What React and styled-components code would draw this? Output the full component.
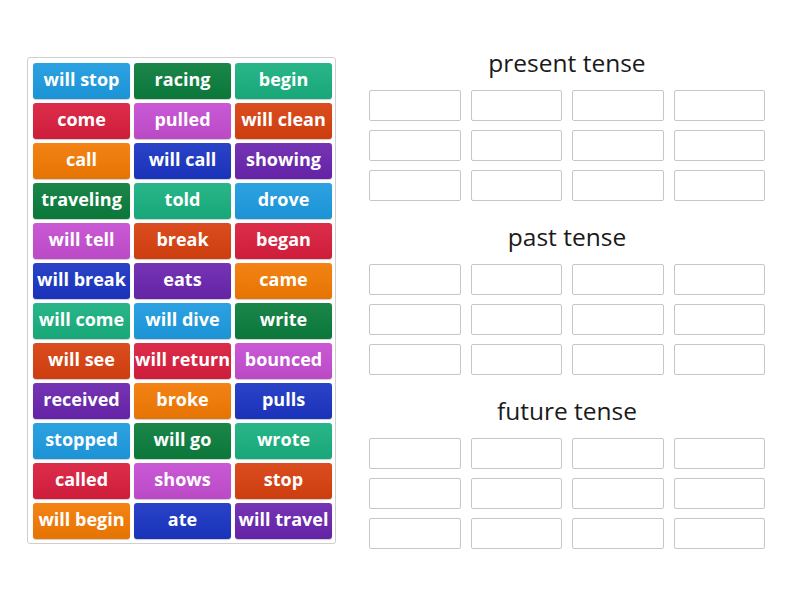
import React from 'react';
import styled, { createGlobalStyle } from 'styled-components';

const GlobalStyle = createGlobalStyle`
  html, body {
    margin: 0;
    padding: 0;
    background: #ffffff;
  }
  body {
    font-family: "Open Sans", "Liberation Sans", sans-serif;
  }
`;

// wordwall style tile colours
const colors = {
  sky: '#1d9be0',
  green: '#0b7d3c',
  teal: '#19b07f',
  red: '#d91e3e',
  magenta: '#c54dd1',
  rust: '#d8400f',
  orange: '#f27a03',
  blue: '#1a35c3',
  purple: '#6a25ae',
};

const tiles = [
  ['will stop', 'sky'], ['racing', 'green'], ['begin', 'teal'],
  ['come', 'red'], ['pulled', 'magenta'], ['will clean', 'rust'],
  ['call', 'orange'], ['will call', 'blue'], ['showing', 'purple'],
  ['traveling', 'green'], ['told', 'teal'], ['drove', 'sky'],
  ['will tell', 'magenta'], ['break', 'rust'], ['began', 'red'],
  ['will break', 'blue'], ['eats', 'purple'], ['came', 'orange'],
  ['will come', 'teal'], ['will dive', 'sky'], ['write', 'green'],
  ['will see', 'rust'], ['will return', 'red'], ['bounced', 'magenta'],
  ['received', 'purple'], ['broke', 'orange'], ['pulls', 'blue'],
  ['stopped', 'sky'], ['will go', 'green'], ['wrote', 'teal'],
  ['called', 'red'], ['shows', 'magenta'], ['stop', 'rust'],
  ['will begin', 'orange'], ['ate', 'blue'], ['will travel', 'purple'],
];

const groups = ['present tense', 'past tense', 'future tense'];

const Page = styled.div`
  display: flex;
  align-items: flex-start;
  gap: 33px;
  padding: 48px 0 0 27px;
`;

const Bank = styled.div`
  margin-top: 9px;
  box-sizing: border-box;
  width: 309px;
  padding: 5px 4px 4px 5px;
  border: 1px solid #cfcfcf;
  border-radius: 3px;
  background: #fff;
  display: grid;
  grid-template-columns: repeat(3, 97px);
  grid-auto-rows: 36px;
  column-gap: 4px;
  row-gap: 4px;
`;

const Tile = styled.div`
  display: flex;
  align-items: center;
  justify-content: center;
  padding-bottom: 4px;
  box-sizing: border-box;
  border-radius: 3px;
  background-color: ${p => colors[p.$tone]};
  background-image: linear-gradient(to bottom, rgba(255, 255, 255, 0.07), rgba(0, 0, 0, 0.05));
  box-shadow: 0 1px 1px rgba(0, 0, 0, 0.2);
  color: #fff;
  font-size: 18px;
  font-weight: 700;
  white-space: nowrap;
`;

const Groups = styled.div`
  width: 396px;
  display: flex;
  flex-direction: column;
  gap: 21px;
`;

const Group = styled.div`
  display: flex;
  flex-direction: column;
  gap: 10px;
`;

const Title = styled.div`
  text-align: center;
  font-size: 24.5px;
  line-height: 32px;
  margin-top: -1px;
  margin-bottom: 1px;
  color: #1a1a1a;
`;

const Slots = styled.div`
  display: grid;
  grid-template-columns: repeat(4, 91.5px);
  grid-auto-rows: 31px;
  justify-content: space-between;
  row-gap: 9px;
`;

const Slot = styled.div`
  box-sizing: border-box;
  border: 1px solid #c6c6c6;
  border-radius: 2px;
  background: #fff;
`;

export default function App() {
  return (
    <>
      <GlobalStyle />
      <Page>
        <Bank>
          {tiles.map(([word, tone]) => (
            <Tile key={word} $tone={tone}>{word}</Tile>
          ))}
        </Bank>
        <Groups>
          {groups.map(name => (
            <Group key={name}>
              <Title>{name}</Title>
              <Slots>
                {Array.from({ length: 12 }).map((_, i) => <Slot key={i} />)}
              </Slots>
            </Group>
          ))}
        </Groups>
      </Page>
    </>
  );
}
